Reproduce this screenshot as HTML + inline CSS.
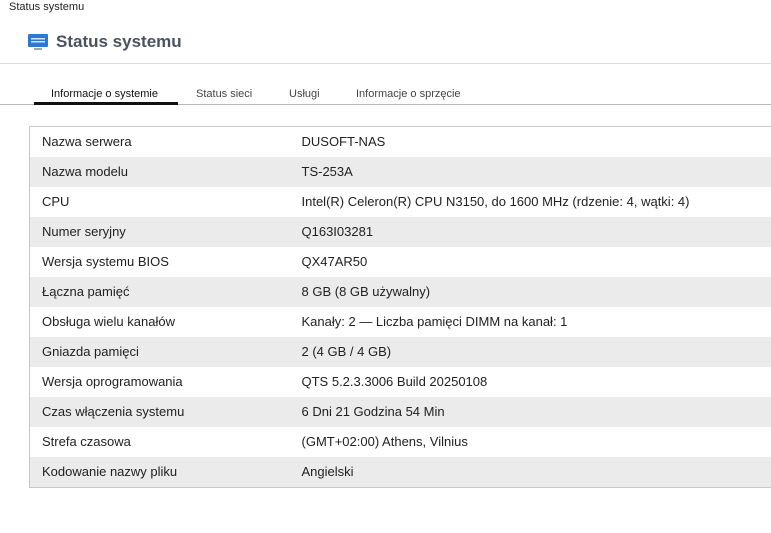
<!DOCTYPE html>
<html><head><style>
body{margin:0;width:771px;height:533px;background:#fff;font-family:"Liberation Sans",sans-serif;position:relative;overflow:hidden;color:#333}
.t{position:absolute;left:9px;top:1px;font-size:11px;color:#222}
.h{position:absolute;left:56px;top:32px;font-size:17px;font-weight:bold;color:#4a5260}
.hl{position:absolute;left:0;top:63px;width:771px;height:1px;background:#dcdcdc}
.tabs{position:absolute;top:88px;font-size:11px;color:#444}
.tl{position:absolute;left:0;top:104px;width:771px;height:1px;background:#bbb}
.ul{position:absolute;left:34px;top:102px;width:144px;height:3px;background:#111}
table{position:absolute;left:29px;top:126px;width:760px;border-collapse:collapse;border:1px solid #c8c8c8;font-size:13px;color:#222;table-layout:fixed}
td{height:30px;padding:0;line-height:30px;white-space:nowrap}
td:first-child{padding-left:12px}
tr:nth-child(even){background:#ebebeb}
</style></head><body>
<div class="t">Status systemu</div>
<svg style="position:absolute;left:28px;top:34px" width="20" height="17" viewBox="0 0 20 17"><rect x="0" y="0" width="20" height="13" rx="1" fill="#2a7bd0"/><rect x="3" y="4" width="14" height="1.5" fill="#cfe3f7"/><rect x="3" y="7" width="14" height="1.5" fill="#cfe3f7"/><rect x="6" y="14" width="8" height="2" fill="#9aa"/></svg>
<div class="h">Status systemu</div>
<div class="hl"></div>
<div class="tabs" style="left:51px;color:#111">Informacje o systemie</div>
<div class="tabs" style="left:196px">Status sieci</div>
<div class="tabs" style="left:289px">Usługi</div>
<div class="tabs" style="left:356px">Informacje o sprzęcie</div>
<div class="tl"></div><div class="ul"></div>
<table>
<colgroup><col style="width:272px"><col></colgroup>
<tr><td>Nazwa serwera</td><td>DUSOFT-NAS</td></tr>
<tr><td>Nazwa modelu</td><td>TS-253A</td></tr>
<tr><td>CPU</td><td>Intel(R) Celeron(R) CPU N3150, do 1600 MHz (rdzenie: 4, wątki: 4)</td></tr>
<tr><td>Numer seryjny</td><td>Q163I03281</td></tr>
<tr><td>Wersja systemu BIOS</td><td>QX47AR50</td></tr>
<tr><td>Łączna pamięć</td><td>8 GB (8 GB używalny)</td></tr>
<tr><td>Obsługa wielu kanałów</td><td>Kanały: 2 — Liczba pamięci DIMM na kanał: 1</td></tr>
<tr><td>Gniazda pamięci</td><td>2 (4 GB / 4 GB)</td></tr>
<tr><td>Wersja oprogramowania</td><td>QTS 5.2.3.3006 Build 20250108</td></tr>
<tr><td>Czas włączenia systemu</td><td>6 Dni 21 Godzina 54 Min</td></tr>
<tr><td>Strefa czasowa</td><td>(GMT+02:00) Athens, Vilnius</td></tr>
<tr><td>Kodowanie nazwy pliku</td><td>Angielski</td></tr>
</table>
</body></html>
